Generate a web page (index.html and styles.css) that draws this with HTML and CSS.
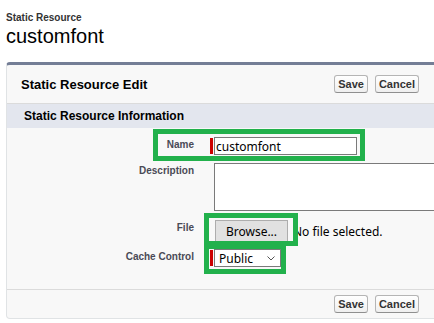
FILE: index.html
```html
<!DOCTYPE html>
<html>
<head>
  <meta charset="UTF-8" />
  <title>Static Resource Edit</title>
  <link rel="stylesheet" href="styles.css">
</head>
<body>
  <div class="page-title">
    <div class="page-type">Static Resource</div>
    <h1 class="page-name">customfont</h1>
  </div>

  <div class="panel">
    <div class="panel-head">
      <h2 class="panel-title">Static Resource Edit</h2>
      <div class="buttons">
        <button class="btn">Save</button>
        <button class="btn">Cancel</button>
      </div>
    </div>

    <h3 class="section-head">Static Resource Information</h3>

    <div class="form">
      <div class="row row-name">
        <label class="label" for="name">Name</label>
        <div class="field required">
          <span class="req-bar"></span>
          <input class="text-input" id="name" type="text" value="customfont" />
        </div>
      </div>

      <div class="row row-desc">
        <label class="label" for="desc">Description</label>
        <div class="field">
          <textarea class="textarea" id="desc"></textarea>
        </div>
      </div>

      <div class="row row-file">
        <label class="label">File</label>
        <div class="field">
          <button class="file-btn">Browse...</button>
          <span class="file-note">No file selected.</span>
        </div>
      </div>

      <div class="row">
        <label class="label">Cache Control</label>
        <div class="field required">
          <span class="req-bar"></span>
          <div class="select">
            <span>Public</span>
            <svg width="8" height="5" viewBox="0 0 8 5"><polyline points="0.5,0.5 4,4 7.5,0.5" fill="none" stroke="#555" stroke-width="1"/></svg>
          </div>
        </div>
      </div>

      <!-- annotation boxes -->
      <div class="mark mark-name"></div>
      <div class="mark mark-file"></div>
      <div class="mark mark-cache"></div>
    </div>

    <div class="panel-foot">
      <div class="buttons">
        <button class="btn">Save</button>
        <button class="btn">Cancel</button>
      </div>
    </div>
  </div>
</body>
</html>
```

FILE: styles.css
```css
body {
  margin: 0;
  width: 434px;
  height: 323px;
  overflow: hidden;
  background: #fff;
  font-family: "Liberation Sans", Arial, sans-serif;
}

.page-title {
  padding: 12px 6px 0;
}

.page-type {
  font-size: 10px;
  font-weight: bold;
  line-height: 12px;
  color: #333;
}

.page-name {
  margin: 0;
  font-size: 20px;
  font-weight: normal;
  line-height: 24px;
  color: #000;
}

.panel {
  margin: 14px 0 0 6px;
  width: 440px;
  box-sizing: border-box;
  background: #f8f8f8;
  border: 1px solid #e0e3e5;
  border-top: 3px solid #747e96;
  border-radius: 4px;
}

.panel-head {
  display: flex;
  align-items: center;
  justify-content: space-between;
  height: 38px;
  padding: 0 26px 0 14px;
  border-bottom: 1px solid #dbdbdb;
}

.panel-title {
  margin: 0;
  font-size: 13px;
  font-weight: bold;
  color: #000;
}

.buttons {
  display: flex;
  gap: 7px;
}

.btn {
  height: 18px;
  padding: 0 3px;
  border: 1px solid #b5b5b5;
  border-bottom-color: #8f8f8f;
  border-radius: 3px;
  background: linear-gradient(#ffffff, #efefef);
  font-family: "Liberation Sans", Arial, sans-serif;
  font-size: 11px;
  font-weight: bold;
  color: #333;
}

.section-head {
  margin: 0;
  height: 24px;
  line-height: 24px;
  padding-left: 17px;
  background: #e3e6ee;
  font-size: 12px;
  font-weight: bold;
  color: #000;
}

.form {
  position: relative;
  padding: 9px 0 22px;
  overflow: hidden;
}

.row {
  display: flex;
  align-items: flex-start;
}

.row-name {
  margin-bottom: 8px;
}

.row-desc {
  margin-bottom: 9px;
}

.row-file {
  margin-bottom: 7px;
}

.label {
  flex-shrink: 0;
  width: 187px;
  margin-right: 16px;
  padding-top: 2px;
  text-align: right;
  font-size: 10px;
  font-weight: bold;
  line-height: 12px;
  color: #4a4a56;
}

.field {
  display: flex;
  flex-shrink: 0;
  align-items: center;
  padding-left: 4px;
  font-family: "Noto Sans", sans-serif;
  font-size: 12px;
  color: #000;
}

.field.required {
  padding-left: 0;
}

.req-bar {
  width: 3px;
  height: 16px;
  margin-right: 1px;
  background: #c00;
}

.text-input {
  width: 143px;
  height: 18px;
  box-sizing: border-box;
  margin: 0;
  padding: 0 1px;
  border: 1px solid #7a7a7a;
  background: #fff;
  font-family: "Noto Sans", sans-serif;
  font-size: 12px;
  color: #000;
}

.textarea {
  display: block;
  width: 300px;
  height: 48px;
  box-sizing: border-box;
  margin: 0;
  border: 1px solid #7a7a7a;
  background: #fff;
  resize: none;
}

.file-btn {
  width: 73px;
  height: 22px;
  margin-left: 1px;
  padding: 0;
  border: 1px solid #adadad;
  background: #e1e1e1;
  font-family: "Noto Sans", sans-serif;
  font-size: 12px;
  color: #000;
}

.file-note {
  margin-left: 5px;
}

.select {
  display: flex;
  align-items: center;
  justify-content: space-between;
  width: 67px;
  height: 18px;
  box-sizing: border-box;
  padding: 0 5px 0 4px;
  border: 1px solid #7a7a7a;
  background: #fff;
}

.mark {
  position: absolute;
  box-sizing: border-box;
  border: 5px solid #22b14c;
}

.mark-name {
  left: 146px;
  top: 1px;
  width: 212px;
  height: 32px;
}

.mark-file {
  left: 197px;
  top: 85px;
  width: 94px;
  height: 33px;
}

.mark-cache {
  left: 197px;
  top: 116px;
  width: 82px;
  height: 30px;
}

.panel-foot {
  display: flex;
  align-items: center;
  justify-content: flex-end;
  height: 28px;
  padding-right: 26px;
  border-top: 1px solid #dbdbdb;
}
```
